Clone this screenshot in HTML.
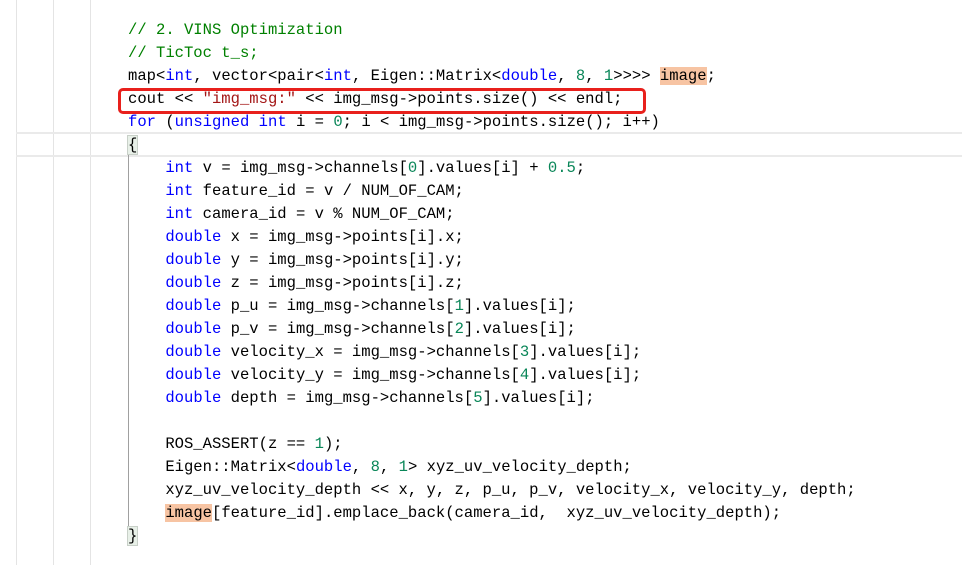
<!DOCTYPE html>
<html><head><meta charset="utf-8"><style>
body{margin:0;width:962px;height:565px;background:#fff;position:relative;overflow:hidden;font-family:"Liberation Mono",monospace;font-size:15.55px;color:#000}
.g{position:absolute;top:0;height:565px;width:1px;background:#e4e4e4}
.cur{position:absolute;left:16px;right:0;top:132px;height:21px;border-top:2px solid #eaeaea;border-bottom:2px solid #eaeaea}
.l{position:absolute;left:128px;height:23px;line-height:23px;white-space:pre;margin-top:2px}
.c{color:#008000}.k{color:#0000ff}.n{color:#098658}.s{color:#a31515}
.h{background:#f7c4a3}
.br{background:#e8f0e8;outline:1px solid #c8d0c8}
</style></head><body>
<div class="g" style="left:16px"></div>
<div class="g" style="left:53px"></div>
<div class="g" style="left:90px"></div>
<div class="cur"></div>
<div style="position:absolute;left:128px;top:155px;width:1px;height:375px;background:#a0a0a0"></div>
<div class="l" style="top:17px"><span class="c">// 2. VINS Optimization</span></div>
<div class="l" style="top:40px"><span class="c">// TicToc t_s;</span></div>
<div class="l" style="top:63px">map&lt;<span class="k">int</span>, vector&lt;pair&lt;<span class="k">int</span>, Eigen::Matrix&lt;<span class="k">double</span>, <span class="n">8</span>, <span class="n">1</span>&gt;&gt;&gt;&gt; <span class="h">image</span>;</div>
<div class="l" style="top:86px">cout &lt;&lt; <span class="s">"img_msg:"</span> &lt;&lt; img_msg-&gt;points.size() &lt;&lt; endl;</div>
<div class="l" style="top:109px"><span class="k">for</span> (<span class="k">unsigned</span> <span class="k">int</span> i = <span class="n">0</span>; i &lt; img_msg-&gt;points.size(); i++)</div>
<div class="l" style="top:132px"><span class="br">{</span></div>
<div class="l" style="top:155px">    <span class="k">int</span> v = img_msg-&gt;channels[<span class="n">0</span>].values[i] + <span class="n">0.5</span>;</div>
<div class="l" style="top:178px">    <span class="k">int</span> feature_id = v / NUM_OF_CAM;</div>
<div class="l" style="top:201px">    <span class="k">int</span> camera_id = v % NUM_OF_CAM;</div>
<div class="l" style="top:224px">    <span class="k">double</span> x = img_msg-&gt;points[i].x;</div>
<div class="l" style="top:247px">    <span class="k">double</span> y = img_msg-&gt;points[i].y;</div>
<div class="l" style="top:270px">    <span class="k">double</span> z = img_msg-&gt;points[i].z;</div>
<div class="l" style="top:293px">    <span class="k">double</span> p_u = img_msg-&gt;channels[<span class="n">1</span>].values[i];</div>
<div class="l" style="top:316px">    <span class="k">double</span> p_v = img_msg-&gt;channels[<span class="n">2</span>].values[i];</div>
<div class="l" style="top:339px">    <span class="k">double</span> velocity_x = img_msg-&gt;channels[<span class="n">3</span>].values[i];</div>
<div class="l" style="top:362px">    <span class="k">double</span> velocity_y = img_msg-&gt;channels[<span class="n">4</span>].values[i];</div>
<div class="l" style="top:385px">    <span class="k">double</span> depth = img_msg-&gt;channels[<span class="n">5</span>].values[i];</div>
<div class="l" style="top:431px">    ROS_ASSERT(z == <span class="n">1</span>);</div>
<div class="l" style="top:454px">    Eigen::Matrix&lt;<span class="k">double</span>, <span class="n">8</span>, <span class="n">1</span>&gt; xyz_uv_velocity_depth;</div>
<div class="l" style="top:477px">    xyz_uv_velocity_depth &lt;&lt; x, y, z, p_u, p_v, velocity_x, velocity_y, depth;</div>
<div class="l" style="top:500px">    <span class="h">image</span>[feature_id].emplace_back(camera_id,  xyz_uv_velocity_depth);</div>
<div class="l" style="top:523px"><span class="br">}</span></div>
<div style="position:absolute;left:118px;top:88px;width:522px;height:20px;border:3px solid #e8201c;border-radius:5px"></div>
</body></html>
